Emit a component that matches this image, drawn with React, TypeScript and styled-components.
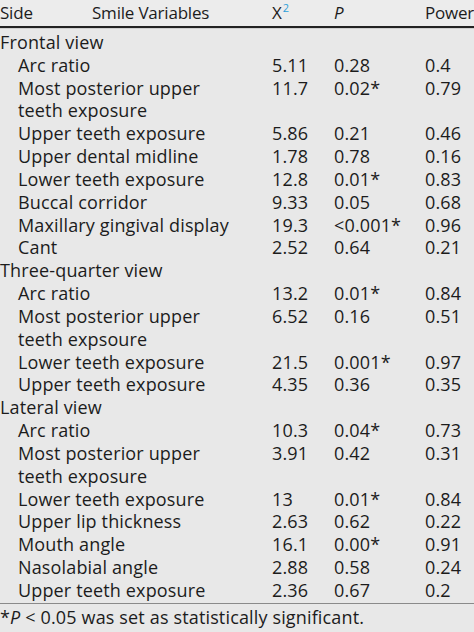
import React from "react";
import styled, { createGlobalStyle } from "styled-components";

const Global = createGlobalStyle`
  html, body { margin: 0; padding: 0; background: #e8e8e8; }
  body { font-family: "Open Sans", "DejaVu Sans", sans-serif; color: #1c1c1c; }
`;

const Page = styled.div`
  width: 474px;
  height: 632px;
  background: #e8e8e8;
  overflow: hidden;
  font-size: 18px;
  letter-spacing: 0.15px;
  line-height: 22.83px;
`;

const Grid = styled.div`
  display: grid;
  grid-template-columns: 272px 62px 91px 1fr;
`;

const HeaderRow = styled(Grid)`
  height: 26px;
  align-items: center;
  background: #ececec;
  border-bottom: 2px solid #222;
  box-shadow: 0 1px 0 #cfcfcf;
  margin-bottom: 3px;
  font-size: 17px;
  letter-spacing: -0.2px;
`;

const HeadLabels = styled.div`
  display: flex;
`;

const HeadCell = styled.span<{ $w?: number; $italic?: boolean }>`
  display: inline-block;
  width: ${(p) => (p.$w ? `${p.$w}px` : "auto")};
  font-style: ${(p) => (p.$italic ? "italic" : "normal")};
  white-space: nowrap;
`;

const Sup = styled.sup`
  color: #2d9fd9;
  font-size: 11px;
  vertical-align: 7px;
  line-height: 0;
  margin-left: 1px;
`;

const Section = styled.div`
  grid-column: 1 / -1;
`;

const Label = styled.div`
  padding-left: 18px;
  width: 212px;
`;

const Cell = styled.div`
  white-space: nowrap;
`;

const Body = styled.div`
  border-bottom: 1px solid #8a8a8a;
  padding-bottom: 1px;
`;

const Foot = styled.div`
  padding-top: 2px;
  white-space: nowrap;
`;

const Ital = styled.i``;

type Row = [string, string, string, string];
type Group = { title: string; rows: Row[] };

const groups: Group[] = [
  {
    title: "Frontal view",
    rows: [
      ["Arc ratio", "5.11", "0.28", "0.4"],
      ["Most posterior upper teeth exposure", "11.7", "0.02*", "0.79"],
      ["Upper teeth exposure", "5.86", "0.21", "0.46"],
      ["Upper dental midline", "1.78", "0.78", "0.16"],
      ["Lower teeth exposure", "12.8", "0.01*", "0.83"],
      ["Buccal corridor", "9.33", "0.05", "0.68"],
      ["Maxillary gingival display", "19.3", "<0.001*", "0.96"],
      ["Cant", "2.52", "0.64", "0.21"],
    ],
  },
  {
    title: "Three-quarter view",
    rows: [
      ["Arc ratio", "13.2", "0.01*", "0.84"],
      ["Most posterior upper teeth expsoure", "6.52", "0.16", "0.51"],
      ["Lower teeth exposure", "21.5", "0.001*", "0.97"],
      ["Upper teeth exposure", "4.35", "0.36", "0.35"],
    ],
  },
  {
    title: "Lateral view",
    rows: [
      ["Arc ratio", "10.3", "0.04*", "0.73"],
      ["Most posterior upper teeth exposure", "3.91", "0.42", "0.31"],
      ["Lower teeth exposure", "13", "0.01*", "0.84"],
      ["Upper lip thickness", "2.63", "0.62", "0.22"],
      ["Mouth angle", "16.1", "0.00*", "0.91"],
      ["Nasolabial angle", "2.88", "0.58", "0.24"],
      ["Upper teeth exposure", "2.36", "0.67", "0.2"],
    ],
  },
];

export default function App() {
  return (
    <Page>
      <Global />
      <HeaderRow>
        <HeadLabels>
          <HeadCell $w={92}>Side</HeadCell>
          <HeadCell>Smile Variables</HeadCell>
        </HeadLabels>
        <HeadCell>
          X<Sup>2</Sup>
        </HeadCell>
        <HeadCell $italic>P</HeadCell>
        <HeadCell>Power</HeadCell>
      </HeaderRow>
      <Body>
        <Grid>
          {groups.map((g) => (
            <React.Fragment key={g.title}>
              <Section>{g.title}</Section>
              {g.rows.map((r, i) => (
                <React.Fragment key={g.title + i}>
                  <Label>{r[0]}</Label>
                  <Cell>{r[1]}</Cell>
                  <Cell>{r[2]}</Cell>
                  <Cell>{r[3]}</Cell>
                </React.Fragment>
              ))}
            </React.Fragment>
          ))}
        </Grid>
      </Body>
      <Foot>
        *<Ital>P</Ital> &lt; 0.05 was set as statistically significant.
      </Foot>
    </Page>
  );
}
